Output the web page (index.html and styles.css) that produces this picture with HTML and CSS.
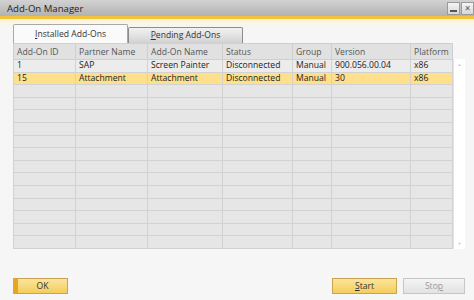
FILE: index.html
```html
<!DOCTYPE html>
<html lang="en">
<head>
    <meta charset="UTF-8">
    <title>Add-On Manager</title>
    <link rel="stylesheet" href="styles.css">
</head>
<body>

    <div class="titlebar">
        <span class="title">Add-On Manager</span>
        <div class="controls">
            <span class="ctl min"></span>
            <span class="ctl close">&#215;</span>
        </div>
    </div>

    <div class="window">
        <div class="tabs">
            <div class="tab active"><u>I</u>nstalled Add-Ons</div>
            <div class="tab"><u>P</u>ending Add-Ons</div>
        </div>

        <div class="grid-wrap">
            <table class="grid">
                <colgroup>
                    <col style="width: 62px">
                    <col style="width: 72px">
                    <col style="width: 75px">
                    <col style="width: 70px">
                    <col style="width: 39px">
                    <col style="width: 79px">
                    <col style="width: 42px">
                </colgroup>
                <thead>
                    <tr>
                        <th>Add-On ID</th>
                        <th>Partner Name</th>
                        <th>Add-On Name</th>
                        <th>Status</th>
                        <th>Group</th>
                        <th>Version</th>
                        <th>Platform</th>
                    </tr>
                </thead>
                <tbody>
                    <tr class="filled">
                        <td>1</td><td>SAP</td><td>Screen Painter</td><td>Disconnected</td><td>Manual</td><td>900.056.00.04</td><td>x86</td>
                    </tr>
                    <tr class="selected">
                        <td>15</td><td>Attachment</td><td>Attachment</td><td>Disconnected</td><td>Manual</td><td>30</td><td>x86</td>
                    </tr>
                    <tr><td></td><td></td><td></td><td></td><td></td><td></td><td></td></tr>
                    <tr><td></td><td></td><td></td><td></td><td></td><td></td><td></td></tr>
                    <tr><td></td><td></td><td></td><td></td><td></td><td></td><td></td></tr>
                    <tr><td></td><td></td><td></td><td></td><td></td><td></td><td></td></tr>
                    <tr><td></td><td></td><td></td><td></td><td></td><td></td><td></td></tr>
                    <tr><td></td><td></td><td></td><td></td><td></td><td></td><td></td></tr>
                    <tr><td></td><td></td><td></td><td></td><td></td><td></td><td></td></tr>
                    <tr><td></td><td></td><td></td><td></td><td></td><td></td><td></td></tr>
                    <tr><td></td><td></td><td></td><td></td><td></td><td></td><td></td></tr>
                    <tr><td></td><td></td><td></td><td></td><td></td><td></td><td></td></tr>
                    <tr><td></td><td></td><td></td><td></td><td></td><td></td><td></td></tr>
                    <tr><td></td><td></td><td></td><td></td><td></td><td></td><td></td></tr>
                    <tr><td></td><td></td><td></td><td></td><td></td><td></td><td></td></tr>
                </tbody>
            </table>
            <div class="scrollbar">
                <span class="arrow">&#9650;</span>
                <span class="arrow">&#9660;</span>
            </div>
        </div>

        <div class="footer">
            <button class="btn ok">OK</button>
            <div class="right-buttons">
                <button class="btn start"><u>S</u>tart</button>
                <button class="btn stop" disabled>Sto<u>p</u></button>
            </div>
        </div>
    </div>

</body>
</html>
```

FILE: styles.css
```css
body {
    font-family: "Open Sans", "Liberation Sans", sans-serif;
    font-size: 8.6px;
    margin: 0;
    width: 474px;
    height: 300px;
    background-color: #f6f6f6;
    color: #333;
    overflow: hidden;
}

.titlebar {
    display: flex;
    align-items: center;
    height: 16px;
    padding-left: 7px;
    background: linear-gradient(#d2d2d2, #b2b2b2);
    border-bottom: 3px solid #f3c23c;
}

.title {
    font-size: 9.6px;
    color: #1e1e1e;
}

.controls {
    margin-left: auto;
    display: flex;
    gap: 1px;
    align-self: flex-end;
    margin-bottom: 1px;
}

.ctl {
    width: 11px;
    height: 11px;
    background: linear-gradient(#f4f4f4, #d8d8d8);
    border: 1px solid #9a9a9a;
    font-size: 10px;
    line-height: 10px;
    text-align: center;
    color: #555;
}

.ctl.min {
    position: relative;
}

.ctl.min::after {
    content: "";
    position: absolute;
    left: 2px;
    right: 2px;
    bottom: 2px;
    height: 2px;
    background-color: #555;
}

.window {
    padding: 0 9px 0 13px;
    background: linear-gradient(#fdf3d4, #f6f6f6 8px);
}

.tabs {
    display: flex;
    align-items: flex-end;
    height: 24px;
}

.tab {
    width: 113px;
    height: 15px;
    line-height: 15px;
    text-align: center;
    color: #333;
    background: linear-gradient(#f2f2f2, #d2d2d2);
    border: 1px solid #8c8c8c;
    border-bottom: none;
    border-radius: 2px 2px 0 0;
}

.tab.active {
    height: 18px;
    line-height: 19px;
    background: #fafafa;
    border-color: #a8a8a8;
}

.tab u {
    text-decoration-thickness: 1px;
    text-underline-offset: 1px;
}

.grid-wrap {
    display: flex;
}

.grid {
    width: 439px;
    table-layout: fixed;
    border-collapse: collapse;
}

.grid th,
.grid td {
    padding: 0 3px;
    text-align: left;
    font-weight: normal;
    white-space: nowrap;
    overflow: hidden;
    border: 1px solid #d2d2d2;
}

.grid th {
    height: 15px;
    background-color: #e1e1e1;
    color: #555;
    border-color: #cfcfcf;
}

.grid td {
    height: 11.6px;
    line-height: 11px;
    background-color: #e6e6e6;
    color: #222;
}

.grid tr.filled td {
    background-color: #ececec;
}

.grid tr.selected td {
    background-color: #fddf8c;
}

.scrollbar {
    width: 12px;
    margin-top: 16px;
    background-color: #ffffff;
    border-left: 1px solid #e4e4e4;
    display: flex;
    flex-direction: column;
    justify-content: space-between;
    align-items: center;
    padding: 3px 0;
}

.arrow {
    font-size: 4px;
    color: #c4c4c4;
}

.footer {
    display: flex;
    align-items: center;
    margin-top: 29px;
}

.right-buttons {
    margin-left: auto;
    display: flex;
    gap: 6px;
}

.btn {
    height: 16px;
    padding: 0;
    font-family: inherit;
    font-size: 8.6px;
    color: #333;
    border: 1px solid #c9a450;
    background: linear-gradient(#fbe49c, #f3cd5c);
}

.btn.ok {
    width: 55px;
    border-left: 5px solid #eba51c;
}

.btn.start {
    width: 65px;
}

.btn.stop {
    width: 62px;
    color: #9a9a9a;
    border-color: #c6c6c6;
    background: linear-gradient(#f4f4f4, #e2e2e2);
}
```
